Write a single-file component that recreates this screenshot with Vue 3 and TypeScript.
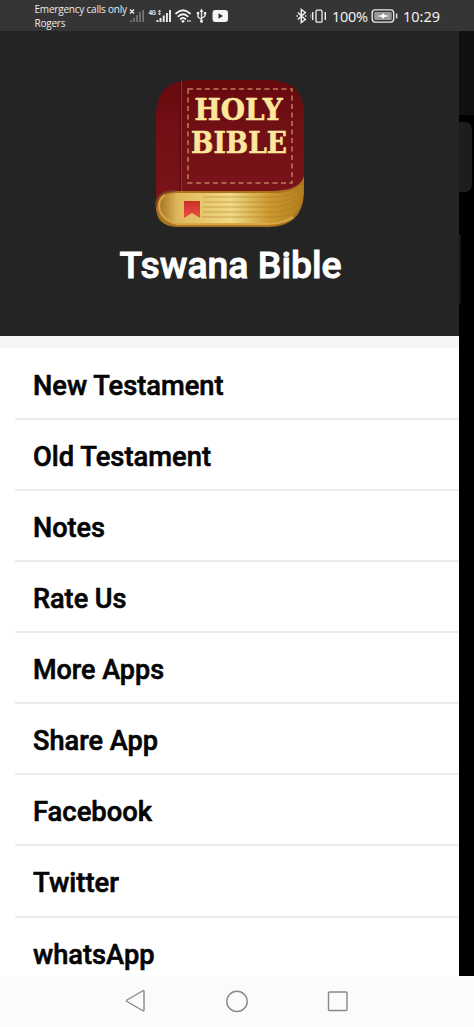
<script setup lang="ts">
interface MenuItem {
  label: string
  width: number
}

const items: MenuItem[] = [
  { label: 'New Testament', width: 190.5 },
  { label: 'Old Testament', width: 178 },
  { label: 'Notes', width: 72 },
  { label: 'Rate Us', width: 93.5 },
  { label: 'More Apps', width: 131 },
  { label: 'Share App', width: 125 },
  { label: 'Facebook', width: 119 },
  { label: 'Twitter', width: 86 },
  { label: 'whatsApp', width: 121.5 },
]
</script>

<template>
  <div class="screen">
    <header class="status">
      <svg class="carrier" width="98" height="31" viewBox="0 0 98 31">
        <text x="0.500" y="13.200" textLength="92.500">Emergency calls only</text>
        <text x="0.500" y="27.200" textLength="31">Rogers</text>
      </svg>
      <svg class="signals" width="104" height="31" viewBox="0 0 104 31">
        <path d="M2 9.500l4 4M6 9.500l-4 4" stroke="#eee" stroke-width="1.4" />
        <path d="M3 22v-2M6 22v-4M9 22v-7M12 22v-10M15.200 22v-12" stroke="#777" stroke-width="1.7" />
        <text class="tiny" x="20.500" y="15" textLength="7.500">4G</text>
        <path d="M31.500 15v-5m-1.500 2l1.500-2 1.500 2M30 13l1.500 2 1.500-2" stroke="#ddd" stroke-width=".8" fill="none" />
        <path d="M29.500 22v-2M32.500 22v-4M35.700 22v-6.500M38.900 22v-9M42 22v-12" stroke="#eee" stroke-width="1.9" />
        <g fill="none" stroke="#f2f2f2" stroke-width="1.8" stroke-linecap="round">
          <path d="M48 13.500q7-6.500 14 0M50.300 16.300q4.700-4.200 9.400 0M52.600 19q2.400-2.200 4.800 0" />
        </g>
        <circle cx="55" cy="21.300" r="1.4" fill="#f2f2f2" />
        <path d="M59.800 20v2M62 20v2" stroke="#ddd" stroke-width="1.2" />
        <path d="M73.500 22v-11M70 13v4l3.500 2.500M77 13v3l-3.500 2.500" stroke="#eee" stroke-width="1.3" fill="none" />
        <path d="M73.500 8.500l2 3.500h-4zM68.800 12h2.400v2.400h-2.400zM75.800 12h2.400v2.400h-2.400z" fill="#eee" />
        <circle cx="73.500" cy="21.300" r="1.5" fill="#eee" />
        <rect x="84.500" y="10" width="15.500" height="12" rx="3" fill="#f6f6f6" />
        <path d="M90.500 13.200v5.600l4.500-2.800z" fill="#353535" />
      </svg>
      <svg class="system" width="146" height="31" viewBox="0 0 146 31">
        <path d="M1.800 12.500l7.500 7-4 3v-13l4 3-7.500 7" fill="none" stroke="#eee" stroke-width="1.5" />
        <path d="M.5 16h1.500M9 16h1.500" stroke="#eee" stroke-width="1.5" />
        <rect x="20" y="10.200" width="6" height="12" rx="1" fill="none" stroke="#eee" stroke-width="1.3" />
        <path d="M16.700 12v8M29.300 12v8" stroke="#eee" stroke-width="1.4" />
        <path d="M14.800 13.500v5" stroke="#999" stroke-width=".8" />
        <text class="sys" x="36" y="22" textLength="36">100%</text>
        <rect x="76.200" y="9.900" width="21.500" height="12.200" rx="3" fill="none" stroke="#e8e8e8" stroke-width="1.4" />
        <rect x="78.200" y="11.900" width="17.500" height="8.200" rx="1.300" fill="#999" />
        <path d="M81 16l5-1 1.500-2 1 2 5 1-5 1-1.500 2-1-2z" fill="#fff" />
        <path d="M100.600 13.500v5" stroke="#ddd" stroke-width="1.5" />
        <text class="sys" x="107" y="22" textLength="37">10:29</text>
      </svg>
    </header>

    <main class="body">
      <aside class="drawer">
        <div class="hero">
          <svg class="book" width="150" height="150" viewBox="0 0 150 150">
            <defs>
              <linearGradient id="cover" x1="0" y1="0" x2="0" y2="1">
                <stop offset="0" stop-color="#66090d" />
                <stop offset=".3" stop-color="#700f15" />
                <stop offset="1" stop-color="#7c161b" />
              </linearGradient>
              <linearGradient id="pages" x1="0" y1="0" x2="1" y2="0">
                <stop offset="0" stop-color="#a37225" />
                <stop offset=".13" stop-color="#dfb85b" />
                <stop offset=".5" stop-color="#f0d985" />
                <stop offset=".76" stop-color="#cb9b31" />
                <stop offset="1" stop-color="#b27e1e" />
              </linearGradient>
              <linearGradient id="ribbon" x1="0" y1="0" x2="0" y2="1">
                <stop offset="0" stop-color="#c92f27" />
                <stop offset="1" stop-color="#ef5145" />
              </linearGradient>
            </defs>
            <path d="M1 126V36Q1 2 36 1H115Q149 2 149 37V112Q145 132 112 137L20 143Q1 140 1 126Z" fill="url(#cover)" />
            <path d="M149 97V115Q147 148 113 148H22Q1 147 1 128Q2 112 20 112H118Q146 111 149 97Z" fill="#a8741f" />
            <path d="M148 104V115Q145 145 112 145H22Q4 143 4 128Q4 114 21 114H122Q141 113 148 104Z" fill="url(#pages)" />
            <g fill="none" stroke="#a97522" stroke-width="1" opacity=".5">
              <path d="M48 118H122Q140 116 148 107M48 123H123Q140 121 148 112M48 128H122Q139 126 148 117M48 133H121Q138 131 147 123M46 138H120Q135 137 144 130" />
            </g>
            <path d="M10 116Q2 121 5 132Q9 142 22 145H112Q128 145 138 138" fill="none" stroke="#d9a949" stroke-width="2" />
            <path d="M20 112Q1 112 1 128" fill="none" stroke="#7e3c22" stroke-width="2" />
            <path d="M25 2V112" stroke="#5c0b10" stroke-width="1.500" />
            <path d="M26.500 2V112" stroke="#85333a" stroke-width="1" />
            <rect x="33" y="10" width="104" height="94" fill="none" stroke="#bd7d58" stroke-width="1.500" stroke-dasharray="5 3.500" />
            <path d="M29 122H45V139L37 134L29 139Z" fill="url(#ribbon)" />
            <text class="cover-title" x="39.500" y="41" textLength="88" lengthAdjust="spacingAndGlyphs">HOLY</text>
            <text class="cover-title" x="36" y="74" textLength="96" lengthAdjust="spacingAndGlyphs">BIBLE</text>
          </svg>
          <svg class="app-name" width="240" height="50" viewBox="0 0 240 50">
            <text x="9.500" y="37" textLength="222" lengthAdjust="spacingAndGlyphs">Tswana Bible</text>
          </svg>
        </div>
        <div class="gap"></div>
        <nav class="menu">
          <a v-for="item in items" :key="item.label" class="row">
            <svg width="240" height="44" viewBox="0 0 240 44">
              <text x="0" y="29.900" :textLength="item.width" lengthAdjust="spacingAndGlyphs">{{ item.label }}</text>
            </svg>
          </a>
        </nav>
      </aside>
      <div class="behind">
        <div class="toolbar"></div>
        <div class="card"></div>
        <div class="sliver"></div>
      </div>
    </main>

    <footer class="navbar">
      <svg width="24" height="24" viewBox="0 0 24 24"><path d="M20 2.500V21Q20 22.500 18.500 21.500L3 12.500Q2 11.800 3 11L18.500 2Q20 1.200 20 2.500Z" /></svg>
      <svg width="24" height="24" viewBox="0 0 24 24"><circle cx="12" cy="12.400" r="10.200" /></svg>
      <svg width="24" height="24" viewBox="0 0 24 24"><rect x="2.500" y="3" width="18.500" height="18.500" rx="1" /></svg>
    </footer>
  </div>
</template>

<style>
body {
  margin: 0;
  background: #fff;
}
</style>

<style scoped>
.screen {
  width: 474px;
  height: 1027px;
  display: flex;
  flex-direction: column;
  overflow: hidden;
  background: #fff;
  font-family: Roboto, "Liberation Sans", sans-serif;
}
svg {
  display: block;
  flex: none;
}
.status {
  height: 31px;
  flex: none;
  display: flex;
  background: #353535;
}
.carrier {
  margin-left: 34px;
  margin-right: -4px;
}
.carrier text {
  font: 10px "Open Sans", sans-serif;
  fill: #ececec;
}
.system {
  margin-left: 64px;
}
.tiny {
  font: bold 6.5px Roboto, sans-serif;
  fill: #ddd;
}
.sys {
  font: 14.5px "Noto Sans", sans-serif;
  fill: #f0f0f0;
}
.body {
  height: 945px;
  flex: none;
  display: flex;
  background: #000;
}
.drawer {
  width: 459px;
  background: #fff;
  overflow: hidden;
}
.hero {
  height: 305px;
  box-sizing: border-box;
  padding-top: 48px;
  background: #242424;
  display: flex;
  flex-direction: column;
  align-items: center;
}
.app-name {
  margin-top: 12px;
}
.app-name text {
  font-size: 37.5px;
  font-weight: 500;
  fill: #fff;
  stroke: #fff;
  stroke-width: 0.9;
}
.cover-title {
  font: bold 30px "DejaVu Serif", serif;
  fill: #fce79c;
  stroke: #fce79c;
  stroke-width: 0.6;
}
.gap {
  height: 12px;
  background: #f5f5f5;
}
.menu {
  display: flex;
  flex-direction: column;
}
.row {
  height: 71.14px;
  flex: none;
  box-sizing: border-box;
  margin-left: 15px;
  padding: 16px 0 0 18px;
  position: relative;
  top: 0.5px;
  border-bottom: 2px solid #ebebeb;
}
.row text {
  font-size: 27.5px;
  font-weight: 500;
  fill: #050505;
  stroke: #050505;
  stroke-width: 0.6;
}
.behind {
  width: 15px;
  overflow: hidden;
}
.toolbar {
  height: 84px;
  background: #101010;
}
.card {
  width: 13px;
  height: 70px;
  margin-top: 7px;
  border-radius: 0 7px 7px 0;
  background: #1d1d1d;
}
.sliver {
  width: 2px;
  height: 70px;
  margin-top: 42px;
  border-radius: 0 2px 2px 0;
  background: #161616;
}
.navbar {
  flex: 1;
  box-sizing: border-box;
  padding: 13px 0 0 124px;
  display: flex;
  gap: 77px;
  background: #fbfbfb;
}
.navbar path,
.navbar circle,
.navbar rect {
  fill: none;
  stroke: #888;
  stroke-width: 1.4;
}
</style>
